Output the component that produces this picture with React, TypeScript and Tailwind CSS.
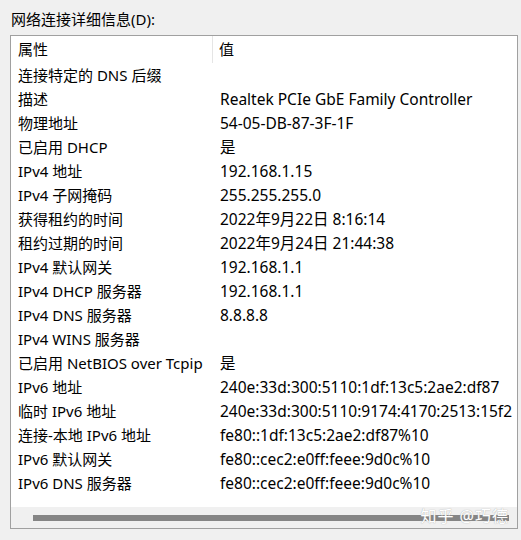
import React from "react";

const rows: [string, string][] = [
  ["连接特定的 DNS 后缀", ""],
  ["描述", "Realtek PCIe GbE Family Controller"],
  ["物理地址", "54-05-DB-87-3F-1F"],
  ["已启用 DHCP", "是"],
  ["IPv4 地址", "192.168.1.15"],
  ["IPv4 子网掩码", "255.255.255.0"],
  ["获得租约的时间", "2022年9月22日 8:16:14"],
  ["租约过期的时间", "2022年9月24日 21:44:38"],
  ["IPv4 默认网关", "192.168.1.1"],
  ["IPv4 DHCP 服务器", "192.168.1.1"],
  ["IPv4 DNS 服务器", "8.8.8.8"],
  ["IPv4 WINS 服务器", ""],
  ["已启用 NetBIOS over Tcpip", "是"],
  ["IPv6 地址", "240e:33d:300:5110:1df:13c5:2ae2:df87"],
  ["临时 IPv6 地址", "240e:33d:300:5110:9174:4170:2513:15f2"],
  ["连接-本地 IPv6 地址", "fe80::1df:13c5:2ae2:df87%10"],
  ["IPv6 默认网关", "fe80::cec2:e0ff:feee:9d0c%10"],
  ["IPv6 DNS 服务器", "fe80::cec2:e0ff:feee:9d0c%10"],
];

export default function App() {
  return (
    <div
      className="w-[521px] h-[540px] bg-[#f0f0f0] text-black overflow-hidden text-[15px] leading-none"
      style={{ fontFamily: '"Noto Sans", "Noto Sans CJK SC", sans-serif' }}
    >
      <div className="pl-[11px] pt-[12px] h-[35px]">网络连接详细信息(D):</div>
      <div className="ml-[10px] w-[508px] h-[494px] border border-[#a0a0a0] bg-white flex flex-col overflow-hidden">
        <div className="flex h-[27px] shrink-0">
          <div className="w-[202px] pl-[7px] flex items-center border-r border-[#e5e5e5]">属性</div>
          <div className="pl-[6px] flex items-center">值</div>
        </div>
        {rows.map(([k, v], i) => (
          <div key={i} className="flex h-[24px] shrink-0 items-baseline leading-[24px] whitespace-nowrap">
            <div className="w-[203px] pl-[7px] shrink-0">{k}</div>
            <div className="pl-[6px] text-[15.5px]">{v}</div>
          </div>
        ))}
        <div className="h-[12px] shrink-0" />
        <div className="relative h-[21px] shrink-0 bg-[#f0f0f0] flex items-center pl-[22px] pr-[8px]">
          <div className="h-[6px] flex-1 bg-[#858585]" />
          <div
            className="absolute right-[8px] top-[1px] text-[16px] text-white tracking-[1px]"
            style={{ textShadow: "0 0 1px #9a9a9a" }}
          >
            知乎 @巧德
          </div>
        </div>
      </div>
    </div>
  );
}
